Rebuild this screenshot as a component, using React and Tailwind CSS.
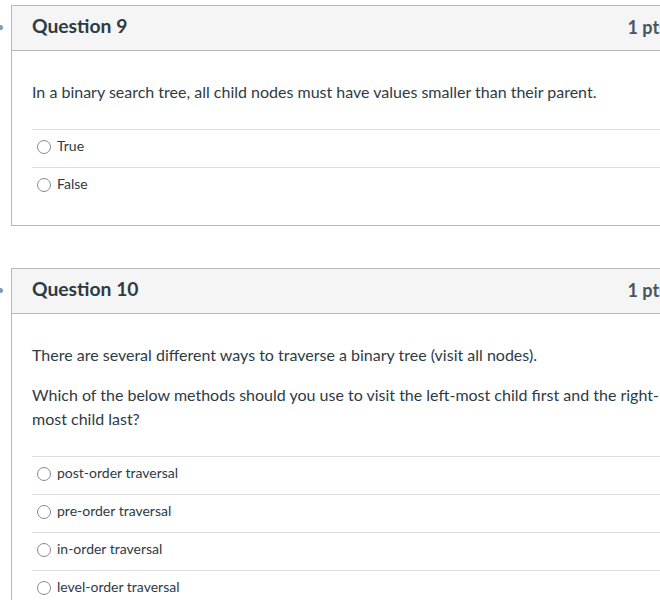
import React from "react";

const font = { fontFamily: "Lato, 'Noto Sans', sans-serif" };

function Option({ label }) {
  return (
    <div className="flex items-center h-[38px] border-t border-[#dcdfe1] pl-[5px] pb-[4px]">
      <span className="w-[14px] h-[14px] rounded-full border border-[#8a8a8a] bg-white shrink-0"></span>
      <span className="ml-[6px] text-[14px] text-[#2d3b45] leading-[20px] pb-[1px]">{label}</span>
    </div>
  );
}

function Marker() {
  return (
    <div className="w-[11px] flex justify-start">
      <span className="block w-[3px] h-[5px] bg-[#7c9cba] rounded-r-sm"></span>
    </div>
  );
}

function Card({ title, children, options }) {
  return (
    <div className="flex items-start">
      <div className="w-[11px] h-[44px] flex items-center">
        <Marker />
      </div>
      <div className="w-[677px] shrink-0 border border-[#b4b9bd] bg-white">
        <div className="h-[45px] bg-[#f5f5f5] border-b border-[#b4b9bd] flex items-center justify-between pl-[20px] pr-[20px]">
          <span className="text-[19.3px] font-bold text-[#2d3b45] leading-none pb-[5px]">{title}</span>
          <span className="text-[18px] font-bold text-[#4a565f] leading-none pb-[3px]">1 pts</span>
        </div>
        <div className="pl-[20px] pr-[23px] pt-[29px] pb-[20px]">
          <div className="text-[16px] leading-[24px] text-[#2d3b45] flex flex-col gap-[16px]">
            {children}
          </div>
          <div className="mt-[25px]">
            {options.map((o) => (
              <Option key={o} label={o} />
            ))}
          </div>
        </div>
      </div>
    </div>
  );
}

export default function App() {
  return (
    <div className="w-[660px] h-[600px] overflow-hidden bg-white pt-[5px]" style={font}>
      <Card title="Question 9" options={["True", "False"]}>
        <p>In a binary search tree, all child nodes must have values smaller than their parent.</p>
      </Card>
      <div className="h-[42px]"></div>
      <Card
        title="Question 10"
        options={["post-order traversal", "pre-order traversal", "in-order traversal", "level-order traversal"]}
      >
        <p>There are several different ways to traverse a binary tree (visit all nodes).</p>
        <p>Which of the below methods should you use to visit the left-most child first and the right-most child last?</p>
      </Card>
    </div>
  );
}
